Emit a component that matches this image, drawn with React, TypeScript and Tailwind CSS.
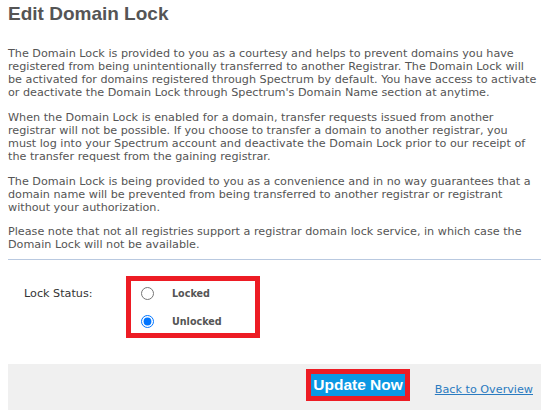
import React from "react";

const body = "font-['DejaVu_Sans',Verdana,sans-serif]";

function Para({ lines, className = "" }: { lines: string[]; className?: string }) {
  return (
    <p className={`${body} text-[11.2px] leading-[13px] text-[#555] whitespace-nowrap ${className}`}>
      {lines.map((l, i) => (
        <React.Fragment key={i}>
          {l}
          {i < lines.length - 1 && <br />}
        </React.Fragment>
      ))}
    </p>
  );
}

export default function App() {
  return (
    <div className="w-[548px] h-[419px] bg-white pl-2 pr-[7px] overflow-hidden">
      <h1 className="mt-[3px] font-['Liberation_Sans',Arial,sans-serif] text-[19px] leading-[22px] font-bold text-[#555]">
        Edit Domain Lock
      </h1>
      <Para
        className="mt-[22px]"
        lines={[
          "The Domain Lock is provided to you as a courtesy and helps to prevent domains you have",
          "registered from being unintentionally transferred to another Registrar. The Domain Lock will",
          "be activated for domains registered through Spectrum by default. You have access to activate",
          "or deactivate the Domain Lock through Spectrum's Domain Name section at anytime.",
        ]}
      />
      <Para
        className="mt-[12px]"
        lines={[
          "When the Domain Lock is enabled for a domain, transfer requests issued from another",
          "registrar will not be possible. If you choose to transfer a domain to another registrar, you",
          "must log into your Spectrum account and deactivate the Domain Lock prior to our receipt of",
          "the transfer request from the gaining registrar.",
        ]}
      />
      <Para
        className="mt-[12px]"
        lines={[
          "The Domain Lock is being provided to you as a convenience and in no way guarantees that a",
          "domain name will be prevented from being transferred to another registrar or registrant",
          "without your authorization.",
        ]}
      />
      <Para
        className="mt-[11px]"
        lines={[
          "Please note that not all registries support a registrar domain lock service, in which case the",
          "Domain Lock will not be available.",
        ]}
      />
      <div className="mt-[8px] h-px bg-[#b9c9e0]" />

      <div className="mt-[16px] flex items-start pl-4">
        <div className={`${body} w-[102px] mt-[11px] text-[11.2px] leading-[13px] text-[#333]`}>
          Lock Status:
        </div>
        <div className="w-[134px] border-[5px] border-[#ed1c24] pl-[10px] pt-[6px] pb-[5px] flex flex-col gap-[15px]">
          <label className="flex items-center h-[13px]">
            <input type="radio" name="lock" className="w-[13px] h-[13px] m-0" />
            <span className={`${body} ml-[18px] text-[9.6px] leading-[13px] font-bold text-[#555]`}>Locked</span>
          </label>
          <label className="flex items-center h-[13px]">
            <input type="radio" name="lock" defaultChecked className="w-[13px] h-[13px] m-0" />
            <span className={`${body} ml-[18px] text-[9.6px] leading-[13px] font-bold text-[#555]`}>Unlocked</span>
          </label>
        </div>
      </div>

      <div className="mt-[26px] h-[46px] bg-[#f0f0f0] flex items-start justify-end pr-2 gap-[25px]">
        <div className="mt-[5px] border-[5px] border-[#ed1c24]">
          <button className="block bg-[#0b98e3] px-[2px] h-[22px] font-['Liberation_Sans',Arial,sans-serif] text-[15.5px] leading-[22px] font-bold text-white">
            Update Now
          </button>
        </div>
        <a
          href="#"
          className={`${body} mt-[19px] text-[11.2px] leading-[13px] text-[#2b7bc0] underline`}
        >
          Back to Overview
        </a>
      </div>
    </div>
  );
}
